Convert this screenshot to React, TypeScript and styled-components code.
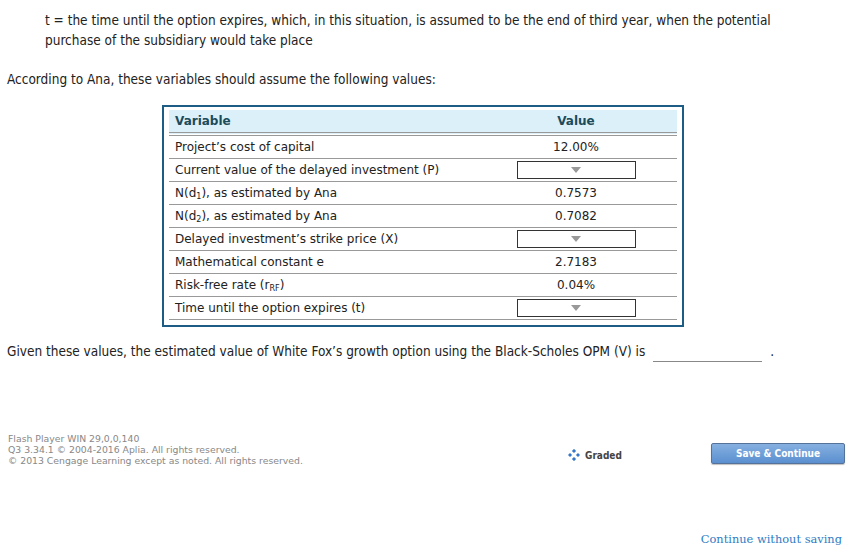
import React from 'react';
import styled, { createGlobalStyle } from 'styled-components';

const Global = createGlobalStyle`
  html, body { margin: 0; padding: 0; background: #fff; }
  body { font-family: "DejaVu Sans", Verdana, sans-serif; color: #222; }
`;

const Page = styled.div`
  width: 853px;
  height: 545px;
  position: relative;
  overflow: hidden;
`;

const Prose = styled.p<{ indent?: number; top?: number; wide?: boolean }>`
  margin: ${p => p.top ?? 0}px 0 0 ${p => p.indent ?? 7}px;
  font-family: "DejaVu Sans Condensed", "DejaVu Sans", sans-serif;
  font-size: 13.5px;
  line-height: 20px;
  color: #222;
  width: ${p => (p.wide ? 840 : 760)}px;
  white-space: ${p => (p.wide ? 'nowrap' : 'normal')};
`;

const TableFrame = styled.div`
  margin: 16px 0 0 162px;
  width: 508px;
  border: 2px solid #1d5d85;
  padding: 3px 5px 5px 5px;
`;

const Grid = styled.table`
  width: 100%;
  border-collapse: collapse;
  font-size: 12px;
`;

const HeadCell = styled.th<{ center?: boolean }>`
  background: #dcf0f9;
  color: #1c4b5c;
  font-weight: bold;
  text-align: ${p => (p.center ? 'center' : 'left')};
  padding: 0 6px;
  height: 22px;
  border-bottom: 4px double #999;
`;

const Cell = styled.td<{ center?: boolean }>`
  height: 22px;
  padding: 0 6px;
  text-align: ${p => (p.center ? 'center' : 'left')};
  border-bottom: 1px solid #999;
  color: #222;
`;

const Select = styled.div`
  margin: 0 auto;
  width: 117px;
  height: 16px;
  border: 1px solid #333;
  display: flex;
  align-items: center;
  justify-content: center;
`;

const Caret = styled.span`
  width: 0;
  height: 0;
  border-left: 5px solid transparent;
  border-right: 5px solid transparent;
  border-top: 6px solid #999;
`;

const Blank = styled.span`
  display: inline-block;
  width: 109px;
  border-bottom: 1px solid #888;
  margin: 0 8px 0 8px;
  height: 16px;
  vertical-align: -6px;
`;

const Footer = styled.div`
  margin-top: 71px;
  display: flex;
  align-items: flex-start;
  padding: 0 8px;
`;

const Legal = styled.div`
  font-family: "DejaVu Sans", sans-serif;
  font-size: 9.3px;
  line-height: 11px;
  color: #888;
  width: 560px;
`;

const Graded = styled.div`
  margin-top: 16px;
  display: flex;
  align-items: center;
  gap: 5px;
  font-family: "DejaVu Sans Condensed", "DejaVu Sans", sans-serif;
  font-size: 10px;
  font-weight: bold;
  color: #444;
  width: 143px;
`;

const SaveButton = styled.button`
  margin-top: 10px;
  width: 134px;
  height: 21px;
  border: 1px solid #55729a;
  border-radius: 2px;
  background: linear-gradient(#86b0e0, #5a8fcf);
  color: #fff;
  font-family: "DejaVu Sans Condensed", "DejaVu Sans", sans-serif;
  font-weight: bold;
  font-size: 10px;
  padding: 0;
  box-shadow: 0 1px 1px rgba(0,0,0,0.25);
`;

const SkipLink = styled.a`
  position: absolute;
  right: 11px;
  bottom: 0;
  font-family: "DejaVu Serif", "Liberation Serif", serif;
  font-size: 11.4px;
  line-height: 12px;
  color: #2e7cc4;
  text-decoration: none;
`;

const Sub = styled.sub`
  font-size: 8px;
  vertical-align: -2px;
`;

const GradedIcon = () => (
  <svg width="12" height="12" viewBox="0 0 12 12">
    <g fill="#3577c8">
      <rect x="4.5" y="0.5" width="3" height="3" transform="rotate(45 6 2)" />
      <rect x="4.5" y="8.5" width="3" height="3" transform="rotate(45 6 10)" />
      <rect x="0.5" y="4.5" width="3" height="3" transform="rotate(45 2 6)" />
      <rect x="8.5" y="4.5" width="3" height="3" transform="rotate(45 10 6)" />
    </g>
  </svg>
);

type Row = { label: React.ReactNode; value?: string };

const rows: Row[] = [
  { label: 'Project’s cost of capital', value: '12.00%' },
  { label: 'Current value of the delayed investment (P)' },
  { label: <>N(d<Sub>1</Sub>), as estimated by Ana</>, value: '0.7573' },
  { label: <>N(d<Sub>2</Sub>), as estimated by Ana</>, value: '0.7082' },
  { label: 'Delayed investment’s strike price (X)' },
  { label: 'Mathematical constant e', value: '2.7183' },
  { label: <>Risk-free rate (r<Sub>RF</Sub>)</>, value: '0.04%' },
  { label: 'Time until the option expires (t)' },
];

export default function App() {
  return (
    <Page>
      <Global />
      <Prose indent={45} top={10}>
        t = the time until the option expires, which, in this situation, is assumed to be the end of third year, when the potential
        purchase of the subsidiary would take place
      </Prose>
      <Prose top={19}>According to Ana, these variables should assume the following values:</Prose>
      <TableFrame>
        <Grid>
          <thead>
            <tr>
              <HeadCell>Variable</HeadCell>
              <HeadCell center style={{ width: 190 }}>Value</HeadCell>
            </tr>
          </thead>
          <tbody>
            {rows.map((r, i) => (
              <tr key={i}>
                <Cell>{r.label}</Cell>
                <Cell center>
                  {r.value ?? (
                    <Select>
                      <Caret />
                    </Select>
                  )}
                </Cell>
              </tr>
            ))}
          </tbody>
        </Grid>
      </TableFrame>
      <Prose top={14} wide>
        Given these values, the estimated value of White Fox’s growth option using the Black-Scholes OPM (V) is
        <Blank />.
      </Prose>
      <Footer>
        <Legal>
          Flash Player WIN 29,0,0,140
          <br />
          Q3 3.34.1 © 2004-2016 Aplia. All rights reserved.
          <br />
          © 2013 Cengage Learning except as noted. All rights reserved.
        </Legal>
        <Graded>
          <GradedIcon />
          Graded
        </Graded>
        <SaveButton>Save &amp; Continue</SaveButton>
      </Footer>
      <SkipLink href="#">Continue without saving</SkipLink>
    </Page>
  );
}
